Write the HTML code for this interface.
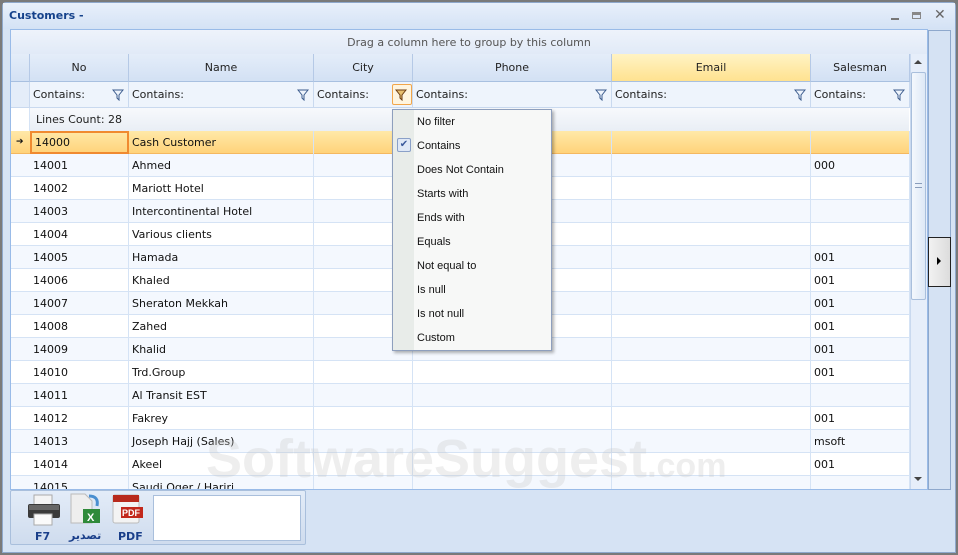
<!DOCTYPE html>
<html><head><meta charset="utf-8"><style>
*{box-sizing:border-box;margin:0;padding:0}
body{width:958px;height:555px;overflow:hidden;background:#7a7a7a;font-family:"DejaVu Sans","Liberation Sans",sans-serif;font-size:11px;color:#000;position:relative}
.win{position:absolute;left:2px;top:2px;width:954px;height:551px;background:#d6e3f4;border:1px solid #8ea8cc;border-radius:4px 4px 0 0}
.title{position:absolute;left:0;top:0;width:952px;height:26px;background:linear-gradient(#e8f0fb,#d4e2f5);}
.title b{position:absolute;left:6px;top:6px;font-size:11px;color:#15428b}
.ab{position:absolute;top:0;}
.grid{position:absolute;left:10px;top:29px;width:918px;height:461px;background:#fff;border:1px solid #99bbe8;overflow:hidden}
.a{position:absolute;white-space:nowrap}
.grp{left:0;top:0;width:916px;height:24px;background:linear-gradient(#eef3fb,#e1eaf7);color:#555;text-align:center;line-height:26px}
.hd{top:24px;height:28px;background:linear-gradient(#e4edf9,#d3e1f4);border-right:1px solid #b5c9e6;border-bottom:1px solid #a8c0e0;text-align:center;line-height:28px;color:#222}
.fl{top:52px;height:26px;background:#eef4fc;border-right:1px solid #c9d9ef;border-bottom:1px solid #c9d9ef;line-height:26px;padding-left:3px;color:#222}
.fi{position:absolute;right:4px;top:7px}
.lc{left:19px;top:78px;width:879px;height:23px;background:linear-gradient(#f7f9fc,#e9eef5);line-height:23px;padding-left:6px;color:#222}
.r{position:absolute;left:0;width:899px;height:23px;border-bottom:1px solid #d5e3f5}
.c{position:absolute;top:0;height:23px;border-right:1px solid #d5e3f5;line-height:23px;padding-left:3px;color:#111}
.menu{left:381px;top:79px;width:160px;height:242px;background:#f7f8f7;border:1px solid #8e9fbd;box-shadow:2px 2px 3px rgba(0,0,0,.3);font-family:"Liberation Sans",sans-serif}
.menu .st{position:absolute;left:0;top:0;width:21px;height:100%;background:#e8ece9}
.menu div.i{position:absolute;left:24px;font-size:11px;color:#111}
</style></head><body>
<div class="win">
<div class="title"><b>Customers -</b>
<span class="ab" style="left:888px;width:8px;height:2px;background:#777;top:15px"></span>
<span class="ab" style="left:909px;top:9px;width:9px;height:7px;border:1px solid #888;border-top:3px solid #888"></span>
<span class="ab" style="left:931px;top:4px;color:#666;font-size:14px">✕</span>
</div>
<div class="a" style="left:925px;top:27px;width:23px;height:460px;background:#d5e2f3;border:1px solid #8ea8cc"></div>
<div class="a" style="left:925px;top:234px;width:23px;height:50px;background:linear-gradient(90deg,#f2f2f2,#dcdcdc);border:1px solid #222"></div>
<div class="a" style="left:934px;top:254px;width:0;height:0;border-left:4px solid #000;border-top:4px solid transparent;border-bottom:4px solid transparent"></div>
</div>
<div class="grid">
<div class="a grp">Drag a column here to group by this column</div>
<div class="a hd" style="left:0;width:19px"></div>
<div class="a hd" style="left:19px;width:99px">No</div>
<div class="a hd" style="left:118px;width:185px">Name</div>
<div class="a hd" style="left:303px;width:99px">City</div>
<div class="a hd" style="left:402px;width:199px">Phone</div>
<div class="a hd" style="left:601px;width:199px;background:linear-gradient(#fff3c4,#ffe290)">Email</div>
<div class="a hd" style="left:800px;width:99px">Salesman</div>
<div class="a fl" style="left:0;width:19px;background:#e4edf9"></div>
<div class="a fl" style="left:19px;width:99px">Contains:<svg class="fi" width="12" height="12"><path d="M1 1h10L7 6v5L5 9V6z" fill="none" stroke="#3a5a8c"/></svg></div>
<div class="a fl" style="left:118px;width:185px">Contains:<svg class="fi" width="12" height="12"><path d="M1 1h10L7 6v5L5 9V6z" fill="none" stroke="#3a5a8c"/></svg></div>
<div class="a fl" style="left:303px;width:99px">Contains:<span class="a" style="left:78px;top:2px;width:20px;height:21px;border:1px solid #f2a64a;border-radius:2px;background:#fff5df"></span><svg class="fi" width="12" height="12" style="right:5px"><path d="M1 1h10L7 6v5L5 9V6z" fill="#e7c070" stroke="#6b3a10"/></svg></div>
<div class="a fl" style="left:402px;width:199px">Contains:<svg class="fi" width="12" height="12"><path d="M1 1h10L7 6v5L5 9V6z" fill="none" stroke="#3a5a8c"/></svg></div>
<div class="a fl" style="left:601px;width:199px">Contains:<svg class="fi" width="12" height="12"><path d="M1 1h10L7 6v5L5 9V6z" fill="none" stroke="#3a5a8c"/></svg></div>
<div class="a fl" style="left:800px;width:99px">Contains:<svg class="fi" width="12" height="12"><path d="M1 1h10L7 6v5L5 9V6z" fill="none" stroke="#3a5a8c"/></svg></div>
<div class="a lc">Lines Count: 28</div>
<div class="a" style="left:0;top:78px;width:19px;height:383px;background:#fff;border-right:1px solid #d5e3f5"></div>

<div class="r" style="top:101px;background:linear-gradient(#ffe9a8,#ffd37a);border-bottom:1px solid #f4b860"><div class="c" style="left:0;width:19px;border:0;padding-left:5px;font-size:9px">➔</div><div class="c" style="left:19px;width:99px;border:2px solid #f08a30;line-height:19px">14000</div><div class="c" style="left:118px;width:185px">Cash Customer</div><div class="c" style="left:303px;width:99px"></div><div class="c" style="left:402px;width:199px"></div><div class="c" style="left:601px;width:199px"></div><div class="c" style="left:800px;width:99px"></div></div>
<div class="r" style="top:124px;background:#f4f8fe"><div class="c" style="left:19px;width:99px">14001</div><div class="c" style="left:118px;width:185px">Ahmed</div><div class="c" style="left:303px;width:99px"></div><div class="c" style="left:402px;width:199px"></div><div class="c" style="left:601px;width:199px"></div><div class="c" style="left:800px;width:99px">000</div></div>
<div class="r" style="top:147px;background:#fff"><div class="c" style="left:19px;width:99px">14002</div><div class="c" style="left:118px;width:185px">Mariott Hotel</div><div class="c" style="left:303px;width:99px"></div><div class="c" style="left:402px;width:199px"></div><div class="c" style="left:601px;width:199px"></div><div class="c" style="left:800px;width:99px"></div></div>
<div class="r" style="top:170px;background:#f4f8fe"><div class="c" style="left:19px;width:99px">14003</div><div class="c" style="left:118px;width:185px">Intercontinental Hotel</div><div class="c" style="left:303px;width:99px"></div><div class="c" style="left:402px;width:199px"></div><div class="c" style="left:601px;width:199px"></div><div class="c" style="left:800px;width:99px"></div></div>
<div class="r" style="top:193px;background:#fff"><div class="c" style="left:19px;width:99px">14004</div><div class="c" style="left:118px;width:185px">Various clients</div><div class="c" style="left:303px;width:99px"></div><div class="c" style="left:402px;width:199px"></div><div class="c" style="left:601px;width:199px"></div><div class="c" style="left:800px;width:99px"></div></div>
<div class="r" style="top:216px;background:#f4f8fe"><div class="c" style="left:19px;width:99px">14005</div><div class="c" style="left:118px;width:185px">Hamada</div><div class="c" style="left:303px;width:99px"></div><div class="c" style="left:402px;width:199px"></div><div class="c" style="left:601px;width:199px"></div><div class="c" style="left:800px;width:99px">001</div></div>
<div class="r" style="top:239px;background:#fff"><div class="c" style="left:19px;width:99px">14006</div><div class="c" style="left:118px;width:185px">Khaled</div><div class="c" style="left:303px;width:99px"></div><div class="c" style="left:402px;width:199px"></div><div class="c" style="left:601px;width:199px"></div><div class="c" style="left:800px;width:99px">001</div></div>
<div class="r" style="top:262px;background:#f4f8fe"><div class="c" style="left:19px;width:99px">14007</div><div class="c" style="left:118px;width:185px">Sheraton Mekkah</div><div class="c" style="left:303px;width:99px"></div><div class="c" style="left:402px;width:199px"></div><div class="c" style="left:601px;width:199px"></div><div class="c" style="left:800px;width:99px">001</div></div>
<div class="r" style="top:285px;background:#fff"><div class="c" style="left:19px;width:99px">14008</div><div class="c" style="left:118px;width:185px">Zahed</div><div class="c" style="left:303px;width:99px"></div><div class="c" style="left:402px;width:199px"></div><div class="c" style="left:601px;width:199px"></div><div class="c" style="left:800px;width:99px">001</div></div>
<div class="r" style="top:308px;background:#f4f8fe"><div class="c" style="left:19px;width:99px">14009</div><div class="c" style="left:118px;width:185px">Khalid</div><div class="c" style="left:303px;width:99px"></div><div class="c" style="left:402px;width:199px"></div><div class="c" style="left:601px;width:199px"></div><div class="c" style="left:800px;width:99px">001</div></div>
<div class="r" style="top:331px;background:#fff"><div class="c" style="left:19px;width:99px">14010</div><div class="c" style="left:118px;width:185px">Trd.Group</div><div class="c" style="left:303px;width:99px"></div><div class="c" style="left:402px;width:199px"></div><div class="c" style="left:601px;width:199px"></div><div class="c" style="left:800px;width:99px">001</div></div>
<div class="r" style="top:354px;background:#f4f8fe"><div class="c" style="left:19px;width:99px">14011</div><div class="c" style="left:118px;width:185px">Al Transit EST</div><div class="c" style="left:303px;width:99px"></div><div class="c" style="left:402px;width:199px"></div><div class="c" style="left:601px;width:199px"></div><div class="c" style="left:800px;width:99px"></div></div>
<div class="r" style="top:377px;background:#fff"><div class="c" style="left:19px;width:99px">14012</div><div class="c" style="left:118px;width:185px">Fakrey</div><div class="c" style="left:303px;width:99px"></div><div class="c" style="left:402px;width:199px"></div><div class="c" style="left:601px;width:199px"></div><div class="c" style="left:800px;width:99px">001</div></div>
<div class="r" style="top:400px;background:#f4f8fe"><div class="c" style="left:19px;width:99px">14013</div><div class="c" style="left:118px;width:185px">Joseph Hajj (Sales)</div><div class="c" style="left:303px;width:99px"></div><div class="c" style="left:402px;width:199px"></div><div class="c" style="left:601px;width:199px"></div><div class="c" style="left:800px;width:99px">msoft</div></div>
<div class="r" style="top:423px;background:#fff"><div class="c" style="left:19px;width:99px">14014</div><div class="c" style="left:118px;width:185px">Akeel</div><div class="c" style="left:303px;width:99px"></div><div class="c" style="left:402px;width:199px"></div><div class="c" style="left:601px;width:199px"></div><div class="c" style="left:800px;width:99px">001</div></div>
<div class="r" style="top:446px;background:#f4f8fe"><div class="c" style="left:19px;width:99px">14015</div><div class="c" style="left:118px;width:185px">Saudi Oger / Hariri</div><div class="c" style="left:303px;width:99px"></div><div class="c" style="left:402px;width:199px"></div><div class="c" style="left:601px;width:199px"></div><div class="c" style="left:800px;width:99px"></div></div>

<div class="a" style="left:195px;top:398px;font-size:54px;font-weight:bold;font-family:'Liberation Sans',sans-serif;color:rgba(200,200,200,.3)">SoftwareSuggest<span style="font-size:34px">.com</span></div>

<div class="a" style="left:899px;top:24px;width:17px;height:437px;background:#e6eefa;border-left:1px solid #c9d9ef"></div>
<div class="a" style="left:903px;top:30px;width:0;height:0;border-bottom:4px solid #444;border-left:4px solid transparent;border-right:4px solid transparent"></div>
<div class="a" style="left:900px;top:42px;width:15px;height:228px;background:linear-gradient(90deg,#f4f8fd,#dde8f6);border:1px solid #a9bfdc;border-radius:2px"></div>
<div class="a" style="left:904px;top:153px;width:7px;height:5px;border-top:1px solid #8a9dbb;border-bottom:1px solid #8a9dbb"></div>
<div class="a" style="left:903px;top:447px;width:0;height:0;border-top:4px solid #444;border-left:4px solid transparent;border-right:4px solid transparent"></div>

<div class="a menu"><div class="st"></div>
<div class="a" style="left:4px;top:28px;width:14px;height:14px;border:1px solid #8aa0c8;border-radius:2px;background:#dfe8f6;color:#3a5a9c;font-size:10px;line-height:12px;text-align:center">✔</div>
<div class="i" style="top:6px">No filter</div>
<div class="i" style="top:30px">Contains</div>
<div class="i" style="top:54px">Does Not Contain</div>
<div class="i" style="top:78px">Starts with</div>
<div class="i" style="top:102px">Ends with</div>
<div class="i" style="top:126px">Equals</div>
<div class="i" style="top:150px">Not equal to</div>
<div class="i" style="top:174px">Is null</div>
<div class="i" style="top:198px">Is not null</div>
<div class="i" style="top:222px">Custom</div>
</div>
</div>

<div class="a" style="left:10px;top:490px;width:296px;height:55px;background:linear-gradient(#e3ecf8,#cfdcee);border:1px solid #a9bfdc;border-radius:2px"></div>
<svg class="a" style="left:27px;top:494px" width="34" height="32"><rect x="7" y="1" width="18" height="10" fill="#f4f4f4" stroke="#aaa"/><rect x="1" y="10" width="32" height="14" rx="2" fill="#3a3a3a"/><rect x="2" y="11" width="30" height="5" fill="#666"/><rect x="7" y="20" width="18" height="11" fill="#fafafa" stroke="#aaa"/></svg>
<svg class="a" style="left:69px;top:492px" width="34" height="34"><path d="M2 2h14l7 7v22H2z" fill="#eee" stroke="#bbb"/><path d="M20 4q10 0 8 10" fill="none" stroke="#4a8fd0" stroke-width="3"/><rect x="14" y="17" width="17" height="14" fill="#2f8a3a"/><text x="18" y="29" font-size="11" fill="#fff" font-weight="bold" font-family="Liberation Sans">X</text></svg>
<svg class="a" style="left:112px;top:493px" width="32" height="32"><rect x="1" y="2" width="26" height="28" rx="2" fill="#f3f3f3" stroke="#bbb"/><rect x="1" y="2" width="26" height="7" fill="#b82a1c"/><rect x="9" y="14" width="22" height="11" fill="#c2281c"/><text x="10" y="23" font-size="9" fill="#fff" font-weight="bold" font-family="Liberation Sans">PDF</text></svg>
<div class="a" style="left:35px;top:530px;font-size:11px;font-weight:bold;color:#1a3f8a">F7</div>
<div class="a" style="left:69px;top:529px;font-size:11px;font-weight:bold;color:#1a3f8a">تصدير</div>
<div class="a" style="left:118px;top:530px;font-size:11px;font-weight:bold;color:#1a3f8a">PDF</div>
<div class="a" style="left:153px;top:495px;width:148px;height:46px;background:#fff;border:1px solid #a9bfdc"></div>
</body></html>
